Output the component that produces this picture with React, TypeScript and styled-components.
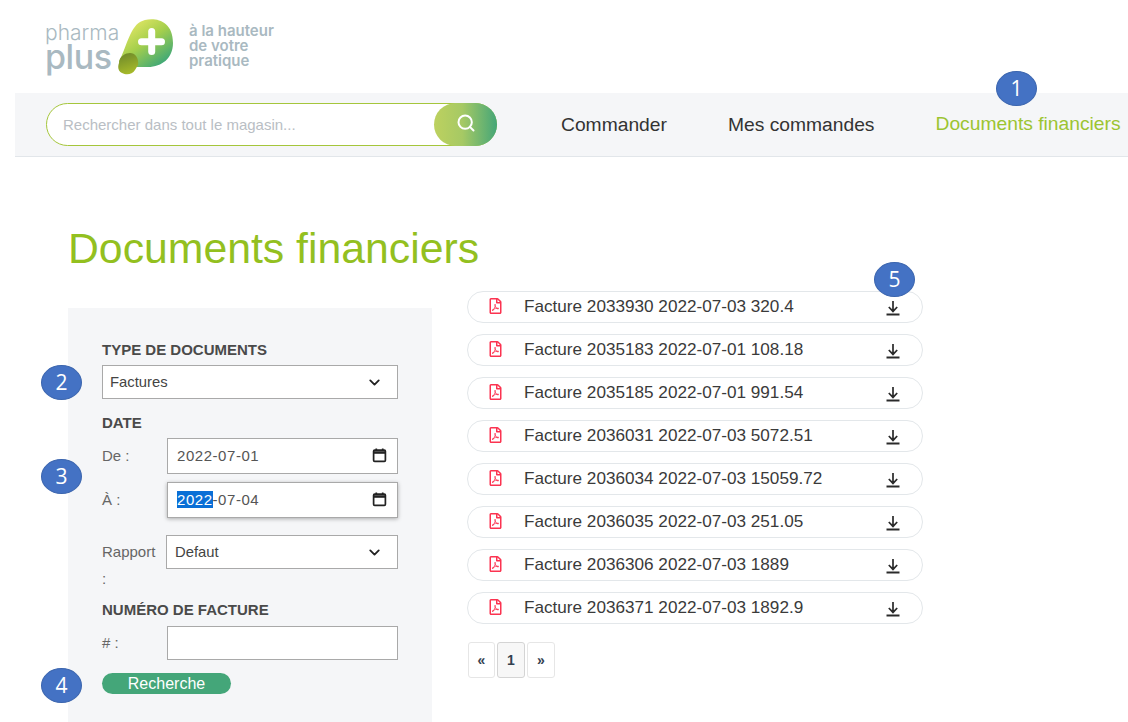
import React from "react";
import styled, { createGlobalStyle } from "styled-components";
import { ChevronDown, Search } from "lucide-react";
import { FaRegFilePdf } from "react-icons/fa";

const Global = createGlobalStyle`
  html, body { margin: 0; padding: 0; background: #fff; }
  body { font-family: "Liberation Sans", Arial, sans-serif; color: #333; }
  * { box-sizing: border-box; }
`;

const Page = styled.div`
  position: relative;
  width: 1128px;
  height: 722px;
  overflow: hidden;
`;

const LogoBar = styled.header`
  height: 93px;
  padding: 18px 0 0 45px;
  display: flex;
  align-items: flex-start;
`;

const Wordmark = styled.div`
  width: 73px;
  padding-top: 4px;
  font-family: Inter, "Liberation Sans", sans-serif;
  color: #a9b9c1;
`;

const Pharma = styled.div`
  font-size: 21px;
  line-height: 21px;
  font-weight: 300;
`;

const Plus = styled.div`
  font-size: 34px;
  line-height: 28px;
  font-weight: 500;
  letter-spacing: -0.4px;
`;

const Tagline = styled.div`
  margin: 5px 0 0 14px;
  font-family: Inter, "Liberation Sans", sans-serif;
  font-size: 15px;
  line-height: 15px;
  font-weight: 600;
  color: #a9b9c1;
  white-space: nowrap;
`;

const NavBar = styled.nav`
  height: 64px;
  margin-left: 15px;
  padding: 10px 0 0 31px;
  background: #f5f6f8;
  border-bottom: 1px solid #e2e6ea;
  display: flex;
  align-items: flex-start;
`;

const SearchBox = styled.div`
  width: 451px;
  height: 43px;
  background: #fff;
  border: 1px solid #a5c63b;
  border-radius: 22px;
  display: flex;
  align-items: center;
  justify-content: space-between;
  padding-left: 16px;
  font-size: 15px;
  color: #b9bec4;
`;

const SearchButton = styled.div`
  width: 63px;
  height: 43px;
  margin: -1px -1px -1px 0;
  padding-bottom: 3px;
  border-radius: 22px;
  background: linear-gradient(90deg, #bdd15f 0%, #a6c964 45%, #45a678 100%);
  color: #fff;
  display: flex;
  align-items: center;
  justify-content: center;
`;

const NavLink = styled.a<{ $active?: boolean; $gap: number }>`
  margin-left: ${(p) => p.$gap}px;
  margin-top: ${(p) => (p.$active ? 9 : 10)}px;
  font-size: 19.25px;
  line-height: 24px;
  white-space: nowrap;
  color: ${(p) => (p.$active ? "#9cc431" : "#333")};
`;

const Main = styled.main`
  padding-left: 68px;
`;

const Title = styled.h1`
  margin: 0;
  padding-top: 66px;
  height: 151px;
  font-size: 42.75px;
  line-height: 50px;
  font-weight: 400;
  color: #93c01f;
`;

const Columns = styled.div`
  display: flex;
  align-items: flex-start;
  gap: 35px;
`;

const Sidebar = styled.aside`
  width: 364px;
  height: 420px;
  padding: 34px 34px 0;
  background: #f5f6f8;
`;

const SectionLabel = styled.div<{ $top?: number; $bottom?: number }>`
  margin-top: ${(p) => p.$top ?? 0}px;
  margin-bottom: ${(p) => p.$bottom ?? 7}px;
  font-size: 15px;
  line-height: 16px;
  font-weight: 700;
  color: #4a4a4a;
`;

const Field = styled.div`
  height: 34px;
  background: #fff;
  border: 1px solid #a9a9a9;
  display: flex;
  align-items: center;
  justify-content: space-between;
  font-size: 14.8px;
  color: #444;
`;

const SelectField = styled(Field)<{ $pad: number }>`
  padding: 0 14px 0 ${(p) => p.$pad}px;
  flex: 1;
`;

const FormRow = styled.div<{ $top?: number }>`
  display: flex;
  align-items: flex-start;
  margin-top: ${(p) => p.$top ?? 0}px;
`;

const RowLabel = styled.div<{ $width: number; $line?: number; $top?: number }>`
  width: ${(p) => p.$width}px;
  padding-top: ${(p) => p.$top ?? 0}px;
  font-size: 15px;
  line-height: ${(p) => p.$line ?? 27}px;
  color: #666;
`;

const DateField = styled(Field)<{ $focused?: boolean }>`
  width: 231px;
  height: 36px;
  padding: 0 10px 2px 9px;
  letter-spacing: 0.55px;
  font-size: 15px;
  color: #555;
  ${(p) => p.$focused && "box-shadow: 0 1px 4px rgba(0,0,0,.3);"}
`;

const DateText = styled.span`
  line-height: 19px;
`;

const Selected = styled.span`
  background: #0a6fd6;
  color: #fff;
`;

const NumberField = styled(Field)`
  width: 231px;
`;

const SubmitButton = styled.div`
  width: 129px;
  height: 21px;
  margin-top: 13px;
  border-radius: 11px;
  background: #44a679;
  color: #fff;
  font-size: 16px;
  line-height: 21px;
  text-align: center;
`;

const Results = styled.section`
  width: 456px;
  margin-top: -17px;
`;

const DocRow = styled.div`
  height: 32px;
  margin-bottom: 11px;
  padding: 0 21px;
  border: 1px solid #e3e7ea;
  border-radius: 16px;
  display: flex;
  align-items: center;
  font-size: 17.15px;
  color: #3a3a3a;
`;

const PdfIcon = styled(FaRegFilePdf)`
  width: 13px;
  height: 16px;
  color: #fb3350;
  margin: -3px 22px 0 0;
  flex: none;
`;

const DocName = styled.span`
  flex: 1;
  margin-top: -2px;
  white-space: nowrap;
`;

const DownloadIcon = styled.svg`
  width: 16px;
  height: 18px;
  margin-top: 2px;
  flex: none;
`;

const Pager = styled.div`
  display: flex;
  gap: 2px;
  margin: 18px 0 0 1px;
`;

const PageButton = styled.div<{ $active?: boolean; $width: number }>`
  width: ${(p) => p.$width}px;
  height: 36px;
  border: 1px solid ${(p) => (p.$active ? "#d4d4d4" : "#e6e6e6")};
  border-radius: 3px;
  background: ${(p) => (p.$active ? "#f7f7f7" : "#fff")};
  display: flex;
  align-items: center;
  justify-content: center;
  font-size: 14px;
  font-weight: 700;
  color: #33414f;
`;

const Marker = styled.div<{ $x: number; $y: number }>`
  position: absolute;
  left: ${(p) => p.$x}px;
  top: ${(p) => p.$y}px;
  width: 41px;
  height: 35px;
  border-radius: 50%;
  background: #4472c4;
  border: 1px solid #3b65ae;
  color: #fff;
  font-family: "Open Sans", sans-serif;
  font-size: 21px;
  line-height: 33px;
  text-align: center;
`;

const LogoMark = () => (
  <svg width="57" height="57" viewBox="0 0 57 57" style={{ flex: "none" }}>
    <defs>
      <linearGradient id="leaf" x1="0.15" y1="0.05" x2="0.85" y2="0.9">
        <stop offset="0" stopColor="#e9e968" />
        <stop offset="0.5" stopColor="#a5cf4c" />
        <stop offset="1" stopColor="#3fa877" />
      </linearGradient>
      <linearGradient id="roll" x1="0.3" y1="0" x2="0.6" y2="1">
        <stop offset="0" stopColor="#6f8a2a" />
        <stop offset="1" stopColor="#a9bc2a" />
      </linearGradient>
    </defs>
    <path d="M22 4C30 -1 55 -2 55 25C55 40 44 49 30 49L19 49L1 44C8 30 12 10 22 4Z" fill="url(#leaf)" />
    <path d="M1 45C1 38 8 35 12 35C18 35 21 41 20 47L17 52C14 57 8 57 4 55C0 53 -0.5 49 1 45Z" fill="url(#roll)" />
    <rect x="30.2" y="10" width="7" height="27" rx="3.5" fill="#fff" />
    <rect x="20" y="20.2" width="27" height="7" rx="3.5" fill="#fff" />
  </svg>
);

const Download = () => (
  <DownloadIcon viewBox="0 0 16 18" fill="none" stroke="#2a2a2a" strokeWidth="1.7">
    <path d="M8 2V12M3.8 8L8 12.4L12.2 8" />
    <path d="M1.5 15.5H14.5" strokeWidth="2" />
  </DownloadIcon>
);

const Calendar = () => (
  <svg width="15" height="15" viewBox="0 0 14 14" fill="none" stroke="#222" strokeWidth="1.6">
    <rect x="1.5" y="2" width="11" height="10.5" rx="1" />
    <path d="M1.5 4.2H12.5" strokeWidth="2.4" />
    <path d="M4 .5V2M10 .5V2" />
  </svg>
);

const documents = [
  "Facture 2033930 2022-07-03 320.4",
  "Facture 2035183 2022-07-01 108.18",
  "Facture 2035185 2022-07-01 991.54",
  "Facture 2036031 2022-07-03 5072.51",
  "Facture 2036034 2022-07-03 15059.72",
  "Facture 2036035 2022-07-03 251.05",
  "Facture 2036306 2022-07-03 1889",
  "Facture 2036371 2022-07-03 1892.9",
];

export default function App() {
  return (
    <Page>
      <Global />
      <LogoBar>
        <Wordmark>
          <Pharma>pharma</Pharma>
          <Plus>plus</Plus>
        </Wordmark>
        <LogoMark />
        <Tagline>
          à la hauteur
          <br />
          de votre
          <br />
          pratique
        </Tagline>
      </LogoBar>
      <NavBar>
        <SearchBox>
          Rechercher dans tout le magasin...
          <SearchButton>
            <Search size={20} strokeWidth={2.4} />
          </SearchButton>
        </SearchBox>
        <NavLink $gap={64}>Commander</NavLink>
        <NavLink $gap={61}>Mes commandes</NavLink>
        <NavLink $gap={61} $active>
          Documents financiers
        </NavLink>
      </NavBar>
      <Main>
        <Title>Documents financiers</Title>
        <Columns>
          <Sidebar>
            <SectionLabel>TYPE DE DOCUMENTS</SectionLabel>
            <SelectField $pad={7}>
              Factures
              <ChevronDown size={17} strokeWidth={2.6} color="#222" />
            </SelectField>
            <SectionLabel $top={16}>DATE</SectionLabel>
            <FormRow>
              <RowLabel $width={65} $line={36}>De :</RowLabel>
              <DateField>
                <DateText>2022-07-01</DateText>
                <Calendar />
              </DateField>
            </FormRow>
            <FormRow $top={8}>
              <RowLabel $width={65} $line={36}>À :</RowLabel>
              <DateField $focused>
                <DateText>
                  <Selected>2022</Selected>-07-04
                </DateText>
                <Calendar />
              </DateField>
            </FormRow>
            <FormRow $top={17}>
              <RowLabel $width={64} $line={27} $top={3}>
                Rapport
                <br />:
              </RowLabel>
              <SelectField $pad={8}>
                Defaut
                <ChevronDown size={17} strokeWidth={2.6} color="#222" />
              </SelectField>
            </FormRow>
            <SectionLabel $top={10} $bottom={8}>NUMÉRO DE FACTURE</SectionLabel>
            <FormRow>
              <RowLabel $width={65} $line={34}># :</RowLabel>
              <NumberField />
            </FormRow>
            <SubmitButton>Recherche</SubmitButton>
          </Sidebar>
          <Results>
            {documents.map((name) => (
              <DocRow key={name}>
                <PdfIcon />
                <DocName>{name}</DocName>
                <Download />
              </DocRow>
            ))}
            <Pager>
              <PageButton $width={27}>«</PageButton>
              <PageButton $width={28} $active>
                1
              </PageButton>
              <PageButton $width={28}>»</PageButton>
            </Pager>
          </Results>
        </Columns>
      </Main>
      <Marker $x={996} $y={71}>1</Marker>
      <Marker $x={41} $y={365}>2</Marker>
      <Marker $x={41} $y={459}>3</Marker>
      <Marker $x={41} $y={668}>4</Marker>
      <Marker $x={874} $y={262}>5</Marker>
    </Page>
  );
}
